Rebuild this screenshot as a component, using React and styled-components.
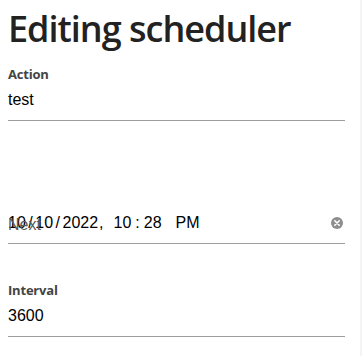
import React from "react";
import styled, { createGlobalStyle } from "styled-components";

//*! Styles
const GlobalStyle = createGlobalStyle`
  html {
    background: linear-gradient(to right, #fff calc(100% - 2px), #f4f4f4 0);
  }
  body {
    margin: 0;
    font-family: "Liberation Sans", Arial, sans-serif;
    color: #111;
  }
`;

const Page = styled.main`
  padding: 7px 8px 6px;
  width: 337px;
`;

const Title = styled.h1`
  margin: 0 0 15px;
  font-family: "Open Sans", "Noto Sans", sans-serif;
  font-weight: 600;
  font-size: 36px;
  line-height: 44px;
  color: #222;
  letter-spacing: -1px;
`;

const Form = styled.form`
  display: flex;
  flex-direction: column;
  gap: 38px;
`;

const Field = styled.div`
  position: relative;
  display: flex;
  flex-direction: column;
`;

const Label = styled.label`
  font-family: "Open Sans", "Noto Sans", sans-serif;
  font-weight: 700;
  font-size: 13px;
  line-height: 16px;
  color: #444;
  letter-spacing: -0.2px;
`;

const FloatLabel = styled.label`
  position: absolute;
  left: 0;
  top: 56px;
  font-size: 16px;
  line-height: 20px;
  color: #5a5a5a;
`;

const Input = styled.div`
  display: flex;
  align-items: center;
  justify-content: space-between;
  padding: ${(p) => p.$top || 8}px 0 10px;
  font-size: 16px;
  line-height: 20px;
  color: #000;
  border-bottom: 1px solid #9e9e9e;
`;

const DateText = styled.div`
  display: flex;
  align-items: baseline;
`;

const Sep = styled.span`
  padding: ${(p) => p.$pad || "0 2.5px"};
`;

const ClearButton = styled.span`
  display: flex;
  margin-right: 2px;
`;

const ClearIcon = () => (
  <svg width="12" height="12" viewBox="0 0 12 12">
    <circle cx="6" cy="6" r="6" fill="#8e8e8e" />
    <path d="M3.8 3.8 L8.2 8.2 M8.2 3.8 L3.8 8.2" stroke="#fff" strokeWidth="1.6" strokeLinecap="round" />
  </svg>
);

export default function App() {
  return (
    <Page>
      <GlobalStyle />
      <Title>Editing scheduler</Title>
      <Form>
        <Field>
          <Label>Action</Label>
          <Input>test</Input>
        </Field>
        <Field>
          <FloatLabel>Next</FloatLabel>
          <Input $top={54}>
            <DateText>
              <span>10</span>
              <Sep>/</Sep>
              <span>10</span>
              <Sep>/</Sep>
              <span>2022</span>
              <Sep $pad="0 10px 0 1px">,</Sep>
              <span>10</span>
              <Sep $pad="0 4px">:</Sep>
              <span>28</span>
              <Sep $pad="0 7px"> </Sep>
              <span>PM</span>
            </DateText>
            <ClearButton>
              <ClearIcon />
            </ClearButton>
          </Input>
        </Field>
        <Field>
          <Label>Interval</Label>
          <Input>3600</Input>
        </Field>
      </Form>
    </Page>
  );
}
